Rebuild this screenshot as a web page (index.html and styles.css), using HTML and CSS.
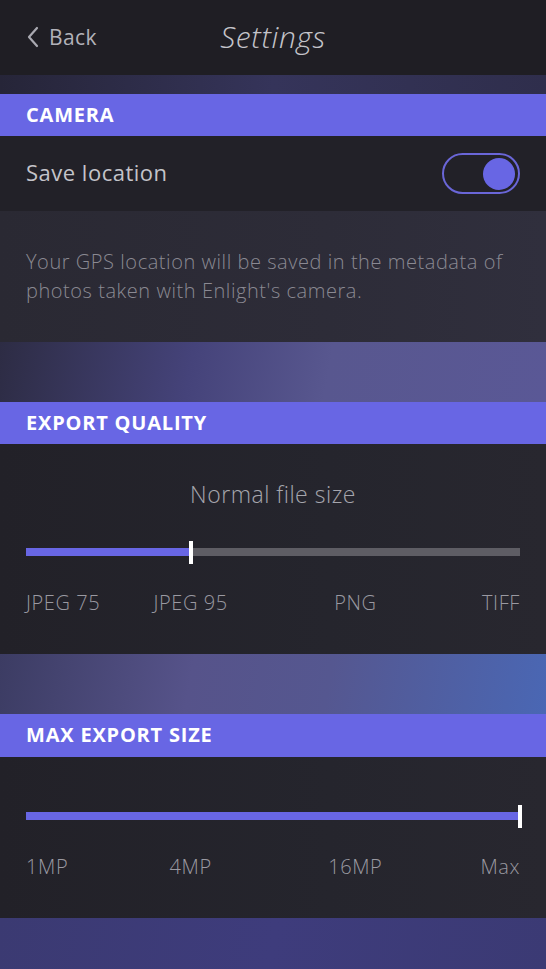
FILE: index.html
```html
<!DOCTYPE html>
<html lang="en">
<head>
  <meta charset="UTF-8" />
  <meta name="viewport" content="width=device-width,initial-scale=1" />
  <title>Settings</title>
  <link rel="stylesheet" href="styles.css">
</head>
<body>
  <header class="topbar">
    <a href="#" class="back">
      <svg class="chevron" width="12" height="22" viewBox="0 0 12 22">
        <path d="M10 2 L2 11 L10 20" fill="none" stroke="#a9a9b1" stroke-width="2.2" stroke-linecap="round" stroke-linejoin="round" />
      </svg>
      <span>Back</span>
    </a>
    <h1>Settings</h1>
    <span></span>
  </header>

  <div class="band band-top"></div>

  <h2 class="section-title">CAMERA</h2>
  <div class="row">
    <span class="row-label">Save location</span>
    <button class="toggle on" aria-label="Save location"><span class="knob"></span></button>
  </div>
  <p class="note">Your GPS location will be saved in the metadata of photos taken with Enlight's camera.</p>

  <div class="band band-mid"></div>

  <h2 class="section-title">EXPORT QUALITY</h2>
  <div class="panel quality">
    <p class="caption">Normal file size</p>
    <div class="track">
      <div class="fill" style="width: 33.3%"><span class="thumb"></span></div>
    </div>
    <div class="ticks">
      <span class="t-first">JPEG 75</span>
      <span class="t-mid1">JPEG 95</span>
      <span class="t-mid2">PNG</span>
      <span class="t-last">TIFF</span>
    </div>
  </div>

  <div class="band band-low"></div>

  <h2 class="section-title tall">MAX EXPORT SIZE</h2>
  <div class="panel size">
    <div class="track">
      <div class="fill" style="width: 100%"><span class="thumb"></span></div>
    </div>
    <div class="ticks">
      <span class="t-first">1MP</span>
      <span class="t-mid1">4MP</span>
      <span class="t-mid2">16MP</span>
      <span class="t-last">Max</span>
    </div>
  </div>

  <div class="band band-bottom"></div>
</body>
</html>
```

FILE: styles.css
```css
body {
  margin: 0;
  font-family: 'Open Sans', 'Noto Sans', sans-serif;
  background: #2a2940;
  color: #c6c6cc;
}

.topbar {
  height: 75px;
  background: #1f1e24;
  display: grid;
  grid-template-columns: 1fr auto 1fr;
  align-items: center;
  padding: 0 26px 2px;
  box-sizing: border-box;
}
.back {
  display: flex;
  align-items: center;
  gap: 10px;
  text-decoration: none;
  color: #b2b2b9;
  font-size: 21px;
  letter-spacing: 0.4px;
}
.chevron {
  margin-left: 1px;
}
.topbar h1 {
  margin: 0;
  font-size: 30px;
  font-weight: 300;
  font-style: italic;
  color: #c4c4ca;
  letter-spacing: 0.6px;
}

.band-top {
  height: 19px;
  background: linear-gradient(90deg, #262538 0%, #35345a 50%, #2f2e4c 100%);
}
.band-mid {
  height: 60px;
  background: linear-gradient(100deg, #2d2c44 0%, #45437a 35%, #58578f 60%, #5a5896 100%);
}
.band-low {
  height: 60px;
  background: linear-gradient(100deg, #3c3c63 0%, #56538a 35%, #555790 60%, #4a67b4 100%);
}
.band-bottom {
  height: 51px;
  background: linear-gradient(100deg, #3b3a72 0%, #3e3c7c 50%, #3b3a74 100%);
}

.section-title {
  margin: 0;
  height: 42px;
  line-height: 42px;
  padding-left: 26px;
  background: #6866e4;
  color: #fff;
  font-size: 20px;
  font-weight: 700;
  letter-spacing: 0.8px;
}
.section-title.tall {
  height: 43px;
}

.row {
  height: 75px;
  background: #222128;
  display: flex;
  align-items: center;
  justify-content: space-between;
  padding: 0 26px;
  font-size: 22px;
  letter-spacing: 0.5px;
  color: #c4c4ca;
}
.row-label {
  margin-top: -4px;
}
.toggle {
  width: 78px;
  height: 41px;
  border: 2px solid #6a66d8;
  border-radius: 21px;
  background: transparent;
  padding: 0 3px;
  display: flex;
  align-items: center;
  justify-content: flex-end;
  box-sizing: border-box;
}
.knob {
  width: 32px;
  height: 32px;
  border-radius: 50%;
  background: #6866e4;
}

.note {
  margin: 0;
  padding: 36px 26px 37px;
  background: linear-gradient(90deg, #2a2933 0%, #2d2c38 60%, #302f3d 100%);
  font-size: 20px;
  line-height: 29px;
  letter-spacing: 0.55px;
  color: #8a8992;
  font-weight: 300;
}

.panel {
  background: linear-gradient(90deg, #222128 0%, #25252d 60%, #28272f 100%);
  padding: 0 26px;
}
.quality {
  padding-top: 35px;
  padding-bottom: 36px;
}
.size {
  padding-top: 55px;
  padding-bottom: 36px;
}
.caption {
  margin: 0 0 39px;
  text-align: center;
  font-size: 23px;
  line-height: 30px;
  letter-spacing: 0.5px;
  color: #a6a6ad;
  font-weight: 300;
}

.track {
  height: 8px;
  background: #5e5d64;
}
.fill {
  position: relative;
  height: 100%;
  background: #6866e4;
}
.thumb {
  position: absolute;
  right: -2px;
  top: -7px;
  width: 4px;
  height: 23px;
  background: #fff;
}

.ticks {
  margin-top: 32px;
  display: grid;
  grid-template-columns: repeat(6, 1fr);
  font-size: 20px;
  line-height: 30px;
  letter-spacing: 0.6px;
  color: #9a99a1;
  font-weight: 300;
  white-space: nowrap;
}
.t-first {
  grid-column: 1;
  justify-self: start;
}
.t-mid1 {
  grid-column: 2 / span 2;
  justify-self: center;
}
.t-mid2 {
  grid-column: 4 / span 2;
  justify-self: center;
}
.t-last {
  grid-column: 6;
  justify-self: end;
}
```
